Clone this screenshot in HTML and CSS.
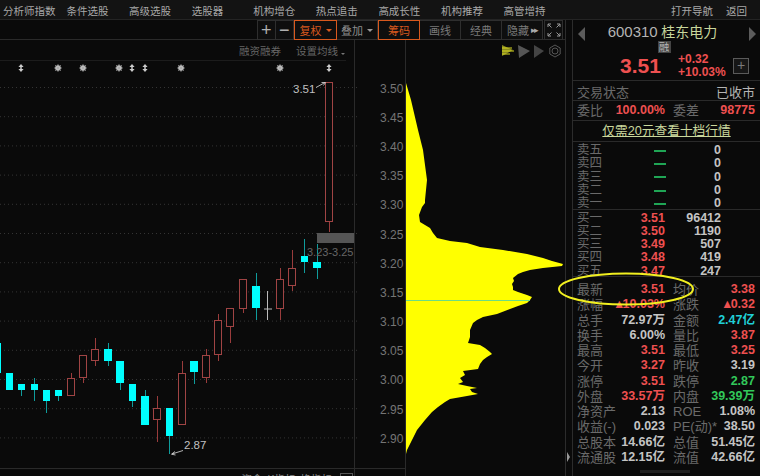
FILE: index.html
```html
<!DOCTYPE html>
<html lang="zh-CN">
<head>
  <meta charset="UTF-8" />
  <meta name="viewport" content="width=device-width, initial-scale=1.0">
  <title>600310 桂东电力</title>
  <link rel="stylesheet" href="styles.css">
</head>
<body>
  <nav class="topnav">
    <a class="first">分析师指数</a>
    <a>条件选股</a>
    <a>高级选股</a>
    <a class="short">选股器</a>
    <a>机构增仓</a>
    <a>热点追击</a>
    <a>高成长性</a>
    <a>机构推荐</a>
    <a>高管增持</a>
    <a class="push">打开导航</a>
    <a class="back">返回</a>
  </nav>

  <div class="main">
    <div class="workspace">
      <div class="toolbar">
        <button class="tool tool-icon">+</button>
        <button class="tool tool-icon">−</button>
        <button class="tool tool-fq active">复权<i class="caret"></i></button>
        <button class="tool tool-overlay">叠加<i class="caret"></i></button>
        <button class="tool tool-chip active">筹码</button>
        <button class="tool tool-draw">画线</button>
        <button class="tool tool-draw">经典</button>
        <button class="tool tool-draw">隐藏<span class="more">▸▸</span></button>
        <button class="tool tool-expand">
          <svg width="14" height="14" viewBox="0 0 14 14" fill="none" stroke="#999" stroke-width="1">
            <path d="M1 4V1H4M1 1L4.5 4.5M10 1H13V4M13 1L9.5 4.5M1 10V13H4M1 13L4.5 9.5M13 10V13H10M13 13L9.5 9.5"/>
          </svg>
        </button>
      </div>

      <div class="panes">
        <section class="kline">
          <div class="kline-head">
            <span>融资融券</span>
            <span class="ma-set">设置均线<i class="caret caret-dim"></i></span>
          </div>
          <svg class="kline-chart" viewBox="0 61 354 407" width="354" height="407">
            <g class="grid">
              <path d="M0 87.5H357M0 116.7H357M0 145.9H357M0 175.1H357M0 204.3H357M0 233.5H357M0 262.7H357M0 291.9H357M0 321.1H357M0 350.3H357M0 379.5H357M0 408.7H357M0 437.9H357"/>
            </g>

            <g class="flags">
              <use href="#flag-arrows" x="21" y="68"/>
              <use href="#flag-star" x="58" y="68"/>
              <use href="#flag-star" x="83" y="68"/>
              <use href="#flag-star" x="119" y="68"/>
              <use href="#flag-arrows" x="132" y="68"/>
              <use href="#flag-arrows" x="145" y="68"/>
              <use href="#flag-star" x="181" y="68"/>
              <use href="#flag-star" x="280" y="68"/>
              <use href="#flag-arrows" x="329" y="68"/>
            </g>
            <defs>
              <g id="flag-star">
                <circle r="2.800" fill="#ccc"/>
                <path d="M-3.8 0H3.8M0 -3.8V3.8M-2.8 -2.8L2.8 2.8M-2.8 2.8L2.8 -2.8" stroke="#aaa" stroke-width="0.8"/>
              </g>
              <g id="flag-arrows">
                <path d="M0 -4L2.6 -1H-2.6ZM0 4L2.6 1H-2.6Z" fill="#ccc"/>
                <path d="M0 -1V1" stroke="#ccc" stroke-width="1.500"/>
              </g>
            </defs>

            <rect class="gap-box" x="317" y="233" width="37" height="10"/>

            <!-- 下跌: 影线 -->
            <path class="wick-down" d="M21.5 390V396M34.5 378V401M46.5 401V413M58.5 396V401M108.5 343V366M120.5 383V390M132.5 401V407M145.5 390V396M169.5 436V454M194.5 372V384M256.5 273V320M304.5 239V273M317.5 244V279"/>
            <!-- 上涨: 影线 -->
            <path class="wick-up" d="M71.5 373V378M83.5 378V383M95.5 338V366M157.5 396V442M182.5 361V373M206.5 349V383M218.5 314V320M218.5 355V361M230.5 327V343M243.5 309V313M280.5 268V320M292.5 250V291M329.5 222V232"/>
            <path class="wick-flat" d="M267.5 291V320M264 309H272"/>

            <g class="body-down">
              <rect x="-6" y="343" width="7" height="30"/>
              <rect x="6" y="373" width="7" height="17"/>
              <rect x="18" y="384" width="7" height="6"/>
              <rect x="31" y="384" width="7" height="6"/>
              <rect x="43" y="390" width="7" height="11"/>
              <rect x="55" y="390" width="7" height="6"/>
              <rect x="104" y="349" width="8" height="12"/>
              <rect x="116" y="361" width="8" height="22"/>
              <rect x="129" y="384" width="7" height="17"/>
              <rect x="141" y="396" width="8" height="29"/>
              <rect x="166" y="408" width="7" height="28"/>
              <rect x="190" y="361" width="8" height="11"/>
              <rect x="252" y="286" width="8" height="22"/>
              <rect x="301" y="256" width="7" height="6"/>
              <rect x="313" y="262" width="8" height="6"/>
            </g>
            <g class="body-up">
              <rect x="67.5" y="378.5" width="7" height="17"/>
              <rect x="79.5" y="355.5" width="7" height="22"/>
              <rect x="91.5" y="349.5" width="7" height="11"/>
              <rect x="153.5" y="408.5" width="7" height="11"/>
              <rect x="178.5" y="373.5" width="7" height="51"/>
              <rect x="202.5" y="355.5" width="7" height="22"/>
              <rect x="214.5" y="320.5" width="7" height="34"/>
              <rect x="226.5" y="308.5" width="7" height="18"/>
              <rect x="239.5" y="279.5" width="7" height="29"/>
              <rect x="276.5" y="279.5" width="7" height="29"/>
              <rect x="288.5" y="268.5" width="7" height="17"/>
              <rect x="325.5" y="82.5" width="7" height="139"/>
            </g>

            <text class="mark" x="293" y="93">3.51</text>
            <path class="mark-arrow" d="M316 87.5L325 82.5M321.5 82.5L325.5 82.5L323.5 85.5"/>
            <text class="mark" x="184" y="449">2.87</text>
            <path class="mark-arrow" d="M183 450.5L172 454M175 451.5L171.5 454.2L175.5 455"/>
            <text class="gap-text" x="307" y="256">3.23-3.25</text>
          </svg>
          <div class="kline-tabs">
            <span>资金</span>
            <span>K指标</span>
            <span>换指标</span>
            <i class="tab-box"></i>
          </div>
        </section>

        <section class="chips">
          <svg viewBox="354 40 211 436" width="211" height="436">
            <path class="axis" d="M354.5 40V476M405.5 40V476M354 468.500H405"/>
            <g class="price-scale">
              <text x="380" y="93">3.50</text>
              <text x="380" y="122">3.45</text>
              <text x="380" y="151">3.40</text>
              <text x="380" y="180">3.35</text>
              <text x="380" y="209">3.30</text>
              <text x="380" y="239">3.25</text>
              <text x="380" y="268">3.20</text>
              <text x="380" y="297">3.15</text>
              <text x="380" y="326">3.10</text>
              <text x="380" y="355">3.05</text>
              <text x="380" y="384">3.00</text>
              <text x="380" y="414">2.95</text>
              <text x="380" y="443">2.90</text>
            </g>
            <polygon class="chip-area" points="406,83 411,100 418,130 423,150 427,180 425,200 425,203 422,207 419,215 420,222 430,228 433,233 437,238 450,241 467,243 480,247 503,250 527,254 543,258 552,261 563,264 562,266 543,268 530,270 523,272 518,274 513,278 514,281 512,284 513,287 513,290 518,292 527,295 532,297 530,300 527,303 518,306 510,309 497,314 483,317 477,320 473,323 470,330 470,337 468,343 480,345 485,348 490,352 492,354 487,357 483,360 480,364 478,369 463,371 465,375 460,378 463,382 458,384 467,386 477,388 470,389 472,392 478,394 467,396 450,399 445,402 438,407 432,412 425,420 417,430 412,440 407,450 406,454"/>
            <path class="chip-cost" d="M406 300.5H530"/>
            <g class="chip-icons">
              <path d="M502 45L513 50L502 56Z" fill="#8a8a20"/>
              <path d="M502 48H512M502 51H514M502 54H510" stroke="#d8d820" stroke-width="1"/>
              <path d="M518 45L530 51L519 58Z" fill="#555"/>
              <path d="M534 45L544 51L534 58Z" fill="#444"/>
              <circle cx="555" cy="51" r="3" fill="none" stroke="#555"/>
              <path d="M555 45L560.2 48V54L555 57L549.800 54V48Z" fill="none" stroke="#555"/>
            </g>
          </svg>
        </section>
      </div>
    </div>

    <div class="gutter"><i class="gutter-arrow"></i></div>

    <aside class="quote">
      <header class="quote-head">
        <div class="quote-title">
          <i class="arrow arrow-left"></i>
          <div class="quote-name"><span class="code">600310</span> <span class="name">桂东电力</span></div>
          <i class="arrow arrow-right"></i>
        </div>
        <div class="badge-wrap"><span class="badge">融</span></div>
        <div class="quote-price">
          <span class="last up">3.51</span>
          <div class="change up">
            <span>+0.32</span>
            <span>+10.03%</span>
          </div>
          <span class="add">+</span>
        </div>
      </header>

      <div class="status-row">
        <span class="label">交易状态</span>
        <span class="status">已收市</span>
      </div>
      <div class="stats ratio-row">
        <div class="stat"><span class="label">委比</span><b class="up">100.00%</b></div>
        <div class="stat"><span class="label">委差</span><b class="up">98775</b></div>
      </div>
      <div class="promo"><a>仅需20元查看十档行情</a></div>

      <div class="book">
        <div class="book-row"><span class="label">卖五</span><i class="dash"></i><b>0</b></div>
        <div class="book-row"><span class="label">卖四</span><i class="dash"></i><b>0</b></div>
        <div class="book-row"><span class="label">卖三</span><i class="dash"></i><b>0</b></div>
        <div class="book-row"><span class="label">卖二</span><i class="dash"></i><b>0</b></div>
        <div class="book-row"><span class="label">卖一</span><i class="dash"></i><b>0</b></div>
      </div>
      <div class="book">
        <div class="book-row"><span class="label">买一</span><b class="up">3.51</b><b>96412</b></div>
        <div class="book-row"><span class="label">买二</span><b class="up">3.50</b><b>1190</b></div>
        <div class="book-row"><span class="label">买三</span><b class="up">3.49</b><b>507</b></div>
        <div class="book-row"><span class="label">买四</span><b class="up">3.48</b><b>419</b></div>
        <div class="book-row"><span class="label">买五</span><b class="up">3.47</b><b>247</b></div>
      </div>

      <div class="stats">
        <div class="stat"><span class="label">最新</span><b class="up">3.51</b></div>
        <div class="stat"><span class="label">均价</span><b class="up">3.38</b></div>
        <div class="stat"><span class="label">涨幅</span><b class="up">▴10.03%</b></div>
        <div class="stat"><span class="label">涨跌</span><b class="up">▴0.32</b></div>
        <div class="stat"><span class="label">总手</span><b>72.97万</b></div>
        <div class="stat"><span class="label">金额</span><b class="cyan">2.47亿</b></div>
        <div class="stat"><span class="label">换手</span><b>6.00%</b></div>
        <div class="stat"><span class="label">量比</span><b class="up">3.87</b></div>
        <div class="stat"><span class="label">最高</span><b class="up">3.51</b></div>
        <div class="stat"><span class="label">最低</span><b class="up">3.25</b></div>
        <div class="stat"><span class="label">今开</span><b class="up">3.27</b></div>
        <div class="stat"><span class="label">昨收</span><b>3.19</b></div>
        <div class="stat"><span class="label">涨停</span><b class="up">3.51</b></div>
        <div class="stat"><span class="label">跌停</span><b class="down">2.87</b></div>
        <div class="stat"><span class="label">外盘</span><b class="up">33.57万</b></div>
        <div class="stat"><span class="label">内盘</span><b class="down">39.39万</b></div>
        <div class="stat"><span class="label">净资产</span><b>2.13</b></div>
        <div class="stat"><span class="label">ROE</span><b>1.08%</b></div>
        <div class="stat"><span class="label">收益(-)</span><b>0.023</b></div>
        <div class="stat"><span class="label">PE(动)*</span><b>38.50</b></div>
        <div class="stat"><span class="label">总股本</span><b>14.66亿</b></div>
        <div class="stat"><span class="label">总值</span><b>51.45亿</b></div>
        <div class="stat"><span class="label">流通股</span><b>12.15亿</b></div>
        <div class="stat"><span class="label">流值</span><b>42.66亿</b></div>
      </div>
      <div class="handle"></div>
    </aside>
  </div>

  <!-- 手绘的黄色圈 -->
  <svg class="circle-note" width="140" height="36" viewBox="0 0 140 36">
    <ellipse cx="70" cy="18" rx="67" ry="15.500"/>
  </svg>
</body>
</html>
```

FILE: styles.css
```css
:root {
  --bg: #0a0a0a;
  --line: #2a2a2a;
  --label: #6a6a6a;
  --value: #c4c4c4;
  --up: #ee5050;
  --down: #32c85a;
  --orange: #d8591e;
}

* {
  box-sizing: border-box;
}

html,
body {
  margin: 0;
  height: 100%;
}

body {
  position: relative;
  width: 760px;
  height: 476px;
  overflow: hidden;
  background: var(--bg);
  color: var(--value);
  font-family: "Liberation Sans", "Noto Sans CJK SC", sans-serif;
}

.topnav {
  display: flex;
  align-items: center;
  height: 20px;
  padding: 1px 0 0 3px;
  background: #131313;
  border-bottom: 1px solid #242424;
  font-size: 10.5px;
  color: #a8a8a8;
  white-space: nowrap;
}

.topnav a {
  margin-right: 20.6px;
}

.topnav .first {
  margin-right: 11px;
}

.topnav .short {
  margin-right: 30px;
}

.topnav .push {
  margin-left: auto;
  margin-right: 13px;
}

.topnav .back {
  margin-right: 13px;
}

.main {
  display: flex;
  height: 456px;
}

.workspace {
  width: 565px;
  display: flex;
  flex-direction: column;
}

.toolbar {
  display: flex;
  justify-content: flex-end;
  height: 20px;
  padding-right: 2px;
  border-bottom: 1px solid var(--line);
}

.tool {
  display: flex;
  align-items: center;
  justify-content: center;
  height: 20px;
  padding: 0;
  background: #0e0e0e;
  border: 1px solid #2e2e2e;
  border-left-width: 0;
  color: #7a7a7a;
  font-family: inherit;
  font-size: 11px;
}

.tool-icon {
  width: 18.500px;
  font-size: 18px;
  color: #b0b0b0;
}

.tool-icon:first-child {
  border-left-width: 1px;
}

.tool-fq,
.tool-chip {
  width: 43px;
}

.tool-overlay {
  width: 41px;
  color: #8c8c8c;
}

.tool-chip {
  width: 42px;
}

.tool-draw {
  width: 41px;
}

.tool-expand {
  width: 19px;
  margin-left: 1px;
  border-left-width: 1px;
}

.tool.active {
  border: 1px solid var(--orange);
  color: var(--orange);
}

.caret {
  display: inline-block;
  margin-left: 4px;
  border: 3px solid transparent;
  border-top-color: currentColor;
  border-bottom-width: 0;
  color: #999;
}

.active .caret {
  color: var(--orange);
}

.more {
  margin-left: 2px;
  font-size: 9px;
  letter-spacing: -2px;
  color: #aaa;
}

.panes {
  flex: 1;
  display: flex;
  min-height: 0;
}

.kline {
  width: 354px;
  display: flex;
  flex-direction: column;
}

.kline-head {
  display: flex;
  justify-content: flex-end;
  align-items: center;
  gap: 15px;
  height: 21px;
  margin-right: 8px;
  padding-right: 1px;
  border-bottom: 1px solid #1c1c1c;
  font-size: 10.5px;
  color: #666;
}

.caret-dim {
  margin-left: 3px;
  color: #777;
  border-width: 2px;
  border-bottom-width: 0;
}

.kline-chart {
  display: block;
  overflow: visible;
}

.grid path {
  fill: none;
  stroke: #343434;
  stroke-dasharray: 1 3;
}

.gap-box {
  fill: #555;
}

.gap-text {
  font-size: 11px;
  fill: #666;
}

.wick-down {
  fill: none;
  stroke: #0f9c9c;
}

.wick-up {
  fill: none;
  stroke: #9a3c3c;
}

.wick-flat {
  fill: none;
  stroke: #bbb;
}

.body-down rect {
  fill: #00ffff;
}

.body-up rect {
  fill: var(--bg);
  stroke: #a04444;
}

.mark {
  font-size: 11.5px;
  fill: #c0c0c0;
}

.mark-arrow {
  fill: none;
  stroke: #ddd;
  stroke-width: 0.8;
}

.kline-tabs {
  display: flex;
  justify-content: flex-end;
  align-items: flex-start;
  gap: 5px;
  height: 8px;
  padding: 4px 1px 0 0;
  border-top: 1px solid var(--line);
  overflow: hidden;
  font-size: 10.5px;
  line-height: 12px;
  color: #8a8a8a;
}

.tab-box {
  width: 13px;
  height: 12px;
  margin-left: 3px;
  border: 1px solid #555;
}

.chips {
  width: 211px;
}

.chips svg {
  display: block;
}

.axis {
  fill: none;
  stroke: #2a2a2a;
}

.price-scale text {
  font-size: 12px;
  fill: #757575;
}

.chip-area {
  fill: #ffff00;
}

.chip-cost {
  fill: none;
  stroke: #6bdc84;
}

.gutter {
  width: 8px;
  display: flex;
  align-items: flex-end;
  padding-bottom: 14px;
  border-left: 1px solid #2c2c2c;
  border-right: 1px solid #2c2c2c;
}

.gutter-arrow {
  margin-left: 1px;
  border: 5px solid transparent;
  border-left: 3px solid #999;
  border-right-width: 0;
}

.quote {
  width: 187px;
  display: flex;
  flex-direction: column;
  font-size: 13px;
}

.label {
  color: var(--label);
  font-weight: 400;
  white-space: nowrap;
}

.up {
  color: var(--up);
}

.down {
  color: var(--down);
}

.cyan {
  color: #20d0d8;
}

.quote-head {
  height: 61px;
  border-bottom: 1px solid var(--line);
}

.quote-title {
  display: flex;
  justify-content: space-between;
  align-items: flex-start;
  height: 21px;
  padding: 1px 4px 0 5px;
}

.quote-name {
  margin-right: 9px;
  white-space: nowrap;
}

.code {
  font-size: 15px;
  color: #b4b4b4;
}

.name {
  font-size: 14px;
  color: #c9d79c;
}

.arrow {
  margin-top: 6px;
  border: 7px solid transparent;
}

.arrow-left {
  border-left-width: 0;
  border-right: 7px solid #5c5c5c;
}

.arrow-right {
  border-right-width: 0;
  border-left: 7px solid #5c5c5c;
}

.badge-wrap {
  display: flex;
  justify-content: center;
  margin-left: -5px;
}

.badge {
  width: 13px;
  height: 12px;
  background: #444;
  color: #b8b8b8;
  font-size: 10.5px;
  line-height: 12px;
  text-align: center;
}

.quote-price {
  display: flex;
  align-items: center;
  padding-left: 47px;
}

.last {
  width: 58px;
  font-size: 21px;
  font-weight: 700;
}

.change {
  display: flex;
  flex-direction: column;
  width: 55px;
  font-size: 12px;
  font-weight: 700;
  line-height: 13px;
}

.add {
  width: 16px;
  height: 16px;
  background: #161616;
  border: 1px solid #5a5a5a;
  color: #7a7a7a;
  font-size: 14px;
  line-height: 13px;
  text-align: center;
}

.status-row {
  display: flex;
  justify-content: space-between;
  align-items: center;
  height: 20px;
  padding: 1px 5px 0 4px;
  border-bottom: 1px solid var(--line);
}

.status {
  color: #b4b4b4;
}

.stats {
  display: grid;
  grid-template-columns: 88px 82px;
  column-gap: 8px;
  padding: 5px 0 0 4px;
  line-height: 15.27px;
}

.ratio-row {
  height: 20px;
  padding-top: 2px;
  border-bottom: 1px solid var(--line);
}

.stat {
  display: flex;
  justify-content: space-between;
}

.stat b,
.book-row b {
  font-size: 12.5px;
}

.promo {
  height: 21px;
  border-bottom: 1px solid var(--line);
  color: #c9d79c;
  font-size: 12.7px;
  line-height: 21px;
  text-align: center;
}

.promo a {
  text-decoration: underline;
  text-underline-offset: 1px;
}

.book {
  height: 67.500px;
  padding: 2px 0 0 4px;
  border-bottom: 1px solid var(--line);
}

.book-row {
  display: grid;
  grid-template-columns: 40px 48px 56px;
  align-items: center;
  justify-items: end;
  height: 13.300px;
  line-height: 13.300px;
}

.book-row .label {
  justify-self: start;
  font-size: 12.5px;
}

.dash {
  width: 12px;
  height: 2px;
  background: #1fa555;
  margin-right: -1px;
}

.handle {
  width: 50px;
  height: 3px;
  margin: 5px 0 0 67px;
  background: #222;
}

.circle-note {
  position: absolute;
  left: 556px;
  top: 271px;
}

.circle-note ellipse {
  fill: none;
  stroke: #f2f020;
  stroke-width: 2;
}
```
